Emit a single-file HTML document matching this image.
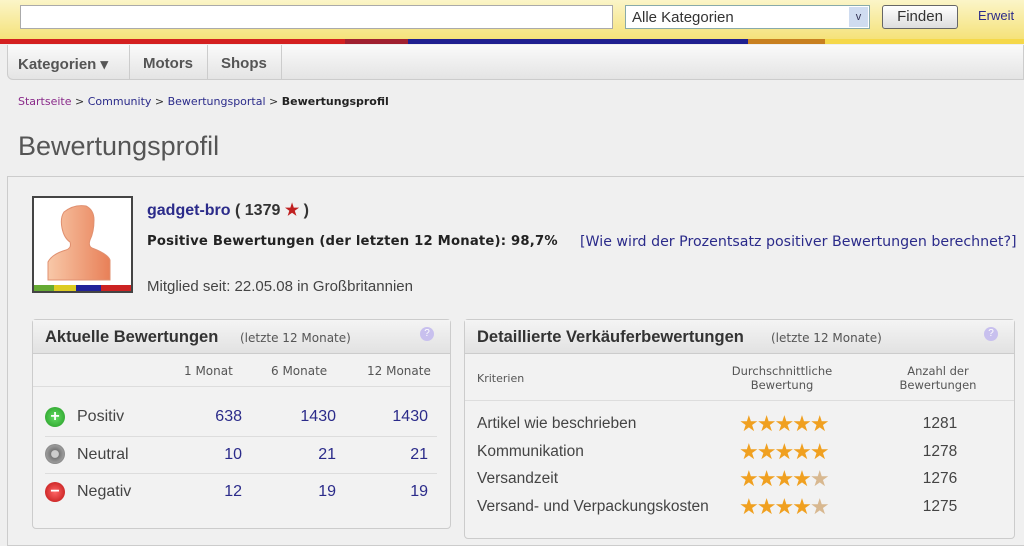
<!DOCTYPE html>
<html><head><meta charset="utf-8"><style>
*{margin:0;padding:0;box-sizing:border-box}
body{width:1024px;height:535px;overflow:hidden;background:#efefef;font-family:"Liberation Sans",Arial,sans-serif;position:relative;color:#333}
.a{position:absolute;white-space:nowrap}
.top{position:absolute;left:0;top:0;width:1024px;height:39px;background:linear-gradient(#fbf5c8,#f5e27a)}
.stripe{position:absolute;top:39px;height:5px}
.v{font-family:"DejaVu Sans",sans-serif}
.star{color:#f0a020;font-size:22px;letter-spacing:-2px}
.n{color:#2b2b8a;text-align:right;width:60px;font-size:16px}
</style></head><body>
<div class="top"></div>
<div class="a" style="left:20px;top:5px;width:593px;height:24px;background:#fff;border:1px solid #aaa"></div>
<div class="a" style="left:625px;top:5px;width:245px;height:24px;background:#fff;border:1px solid #8aa;font-size:15px;padding:3px 6px">Alle Kategorien</div>
<div class="a" style="left:849px;top:7px;width:19px;height:20px;background:#cfdcf0;color:#335;font-size:11px;text-align:center;line-height:20px">v</div>
<div class="a" style="left:882px;top:5px;width:76px;height:24px;background:linear-gradient(#fff,#ddd);border:1px solid #666;border-radius:3px;font-size:15px;text-align:center;line-height:22px">Finden</div>
<div class="a" style="left:978px;top:8px;font-size:13px;color:#2b2b8a">Erweit</div>
<div class="stripe" style="left:0;width:345px;background:#d42020"></div>
<div class="stripe" style="left:345px;width:63px;background:#a02030"></div>
<div class="stripe" style="left:408px;width:340px;background:#202090"></div>
<div class="stripe" style="left:748px;width:77px;background:#c88020"></div>
<div class="stripe" style="left:825px;width:199px;background:#f5d84a"></div>
<div class="a" style="left:7px;top:45px;width:1017px;height:35px;background:linear-gradient(#fafafa,#e4e4e4);border:1px solid #ccc;border-top:none;border-radius:0 0 0 6px"></div>
<div class="a" style="left:129px;top:45px;width:1px;height:35px;background:#ccc"></div>
<div class="a" style="left:207px;top:45px;width:1px;height:35px;background:#ccc"></div>
<div class="a" style="left:281px;top:45px;width:1px;height:35px;background:#ccc"></div>
<div class="a" style="left:18px;top:55px;font-size:15px;font-weight:bold;color:#555">Kategorien ▾</div>
<div class="a" style="left:143px;top:55px;font-size:15px;font-weight:bold;color:#555">Motors</div>
<div class="a" style="left:221px;top:55px;font-size:15px;font-weight:bold;color:#555">Shops</div>
<div class="a v" style="left:18px;top:95px;font-size:11px;color:#2b2b8a"><span style="color:#8a2b8a">Startseite</span> <span style="color:#333">&gt;</span> Community <span style="color:#333">&gt;</span> Bewertungsportal <span style="color:#333">&gt;</span> <b style="color:#222">Bewertungsprofil</b></div>
<div class="a" style="left:18px;top:131px;font-size:27px;color:#555">Bewertungsprofil</div>
<div class="a" style="left:7px;top:176px;width:1017px;height:370px;border:1px solid #ccc;border-right:none;background:#f0f0f0"></div>
<div class="a" style="left:32px;top:196px;width:101px;height:97px;border:2px solid #444;background:#fff;overflow:hidden">
<svg width="97" height="93" viewBox="0 0 97 93"><defs><linearGradient id="g" x1="0" x2="1"><stop offset="0" stop-color="#f8c8a8"/><stop offset="1" stop-color="#e88058"/></linearGradient></defs>
<path d="M30 14 Q40 6 52 8 Q60 12 60 22 Q60 34 56 42 Q54 48 58 50 Q74 56 76 62 L76 82 L14 82 L14 64 Q18 56 32 52 Q38 50 36 44 Q30 40 28 30 Q26 20 30 14Z" fill="url(#g)" stroke="#e09070"/>
<rect x="0" y="87" width="20" height="6" fill="#6a3"/><rect x="20" y="87" width="22" height="6" fill="#dc2"/><rect x="42" y="87" width="25" height="6" fill="#229"/><rect x="67" y="87" width="30" height="6" fill="#c22"/></svg></div>
<div class="a" style="left:147px;top:200px;font-size:16px;font-weight:bold"><span style="color:#2b2b8a">gadget-bro</span> ( 1379 <span style="color:#c02020">★</span> )</div>
<div class="a v" style="left:147px;top:234px;font-size:13.2px;font-weight:bold;color:#222;letter-spacing:0.2px">Positive Bewertungen (der letzten 12 Monate): 98,7%</div>
<div class="a v" style="left:580px;top:234px;font-size:14.2px;color:#2b2b8a">[Wie wird der Prozentsatz positiver Bewertungen berechnet?]</div>
<div class="a" style="left:147px;top:278px;font-size:15px;color:#444">Mitglied seit: 22.05.08 in Großbritannien</div>

<div class="a" style="left:32px;top:319px;width:419px;height:210px;border:1px solid #ccc;border-radius:4px;background:#f2f2f2"></div>
<div class="a" style="left:33px;top:320px;width:417px;height:34px;background:linear-gradient(#f4f4f4,#e2e2e2);border-bottom:1px solid #ccc"></div>
<div class="a" style="left:45px;top:328px;font-size:16.5px;font-weight:bold;color:#333">Aktuelle Bewertungen</div>
<div class="a v" style="left:240px;top:331px;font-size:12px;color:#555">(letzte 12 Monate)</div>
<div class="a" style="left:420px;top:327px;width:14px;height:14px;border-radius:50%;background:#c8c0ee;color:#fff;font-size:10px;text-align:center;line-height:14px">?</div>
<div class="a v" style="left:184px;top:364px;font-size:12px;color:#555">1 Monat</div>
<div class="a v" style="left:271px;top:364px;font-size:12px;color:#555">6 Monate</div>
<div class="a v" style="left:367px;top:364px;font-size:12px;color:#555">12 Monate</div>
<div class="a" style="left:33px;top:386px;width:417px;height:1px;background:#ddd"></div>
<div class="a" style="left:45px;top:436px;width:392px;height:1px;background:#ddd"></div>
<div class="a" style="left:45px;top:473px;width:392px;height:1px;background:#ddd"></div>
<div class="a" style="left:45px;top:407px;width:20px;height:20px;border-radius:50%;background:radial-gradient(#6d6,#292);color:#fff;font-weight:bold;text-align:center;line-height:20px;font-size:16px">+</div>
<div class="a" style="left:45px;top:444px;width:20px;height:20px;border-radius:50%;background:radial-gradient(#ccc 25%,#777 30%,#999 60%,#555);"></div>
<div class="a" style="left:45px;top:482px;width:20px;height:20px;border-radius:50%;background:radial-gradient(#f66,#b11);color:#fff;font-weight:bold;text-align:center;line-height:19px;font-size:16px">−</div>
<div class="a" style="left:77px;top:408px;font-size:16px;color:#444">Positiv</div>
<div class="a" style="left:77px;top:446px;font-size:16px;color:#444">Neutral</div>
<div class="a" style="left:77px;top:483px;font-size:16px;color:#444">Negativ</div>
<div class="a n" style="left:182px;top:408px">638</div><div class="a n" style="left:276px;top:408px">1430</div><div class="a n" style="left:368px;top:408px">1430</div>
<div class="a n" style="left:182px;top:446px">10</div><div class="a n" style="left:276px;top:446px">21</div><div class="a n" style="left:368px;top:446px">21</div>
<div class="a n" style="left:182px;top:483px">12</div><div class="a n" style="left:276px;top:483px">19</div><div class="a n" style="left:368px;top:483px">19</div>

<div class="a" style="left:464px;top:319px;width:551px;height:220px;border:1px solid #ccc;border-radius:4px;background:#f2f2f2"></div>
<div class="a" style="left:465px;top:320px;width:549px;height:34px;background:linear-gradient(#f4f4f4,#e2e2e2);border-bottom:1px solid #ccc"></div>
<div class="a" style="left:477px;top:328px;font-size:16.5px;font-weight:bold;color:#333">Detaillierte Verkäuferbewertungen</div>
<div class="a v" style="left:771px;top:331px;font-size:12px;color:#555">(letzte 12 Monate)</div>
<div class="a" style="left:984px;top:327px;width:14px;height:14px;border-radius:50%;background:#c8c0ee;color:#fff;font-size:10px;text-align:center;line-height:14px">?</div>
<div class="a v" style="left:477px;top:372px;font-size:11px;color:#555">Kriterien</div>
<div class="a v" style="left:722px;top:364px;width:120px;text-align:center;font-size:11.5px;line-height:14px;color:#555">Durchschnittliche<br>Bewertung</div>
<div class="a v" style="left:878px;top:364px;width:120px;text-align:center;font-size:11.5px;line-height:14px;color:#555">Anzahl der<br>Bewertungen</div>
<div class="a" style="left:465px;top:400px;width:549px;height:1px;background:#ddd"></div>
<div class="a" style="left:477px;top:410px;font-size:15.5px;color:#444;line-height:27.5px">Artikel wie beschrieben<br>Kommunikation<br>Versandzeit<br>Versand- und Verpackungskosten</div>
<div class="a star" style="left:739px;top:410px;line-height:27.5px">★★★★★<br>★★★★★<br>★★★★<span style="color:#d8b890">★</span><br>★★★★<span style="color:#d8b890">★</span></div>
<div class="a" style="left:900px;top:410px;width:80px;text-align:center;font-size:15.5px;color:#444;line-height:27.5px">1281<br>1278<br>1276<br>1275</div>
</body></html>
